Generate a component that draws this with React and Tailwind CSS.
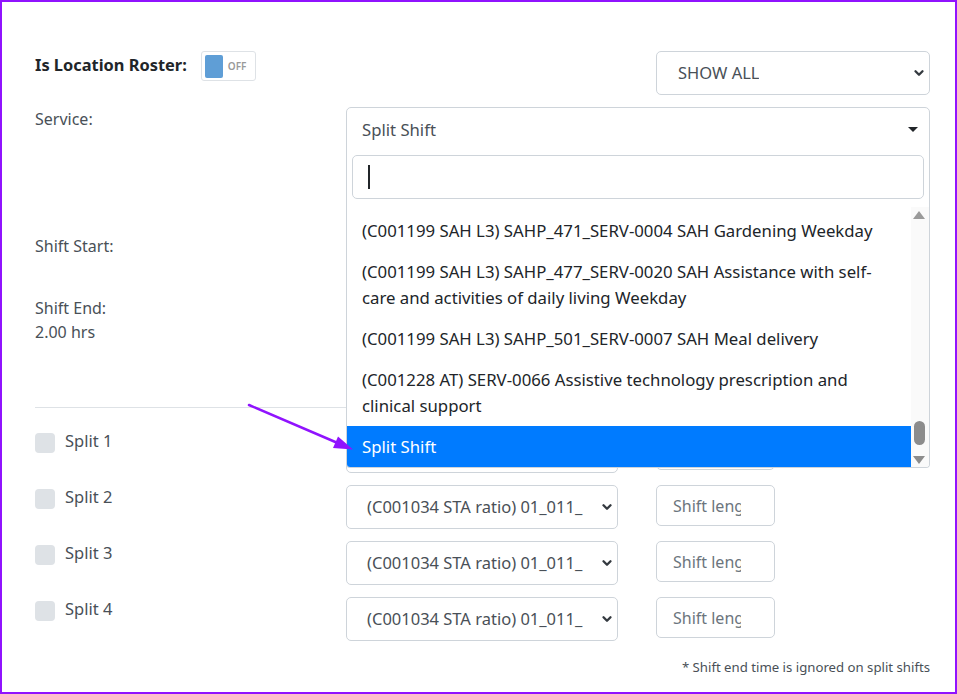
import React from 'react'
import { ChevronDown } from 'lucide-react'

const services = [
	{ id: 1, text: '(C001199 SAH L3) SAHP_471_SERV-0004 SAH Gardening Weekday' },
	{ id: 2, text: '(C001199 SAH L3) SAHP_477_SERV-0020 SAH Assistance with self-care and activities of daily living Weekday' },
	{ id: 3, text: '(C001199 SAH L3) SAHP_501_SERV-0007 SAH Meal delivery' },
	{ id: 4, text: '(C001228 AT) SERV-0066 Assistive technology prescription and clinical support' },
]

const SelectBox = ({ label, className }) => (
	<div className={`flex items-center justify-between h-[44px] bg-white border border-[#ced4da] rounded-[5px] text-[16.5px] text-[#495057] ${className}`}>
		<span className="pl-[20px] whitespace-nowrap overflow-hidden">{label}</span>
		<ChevronDown size={14} strokeWidth={4} className="mr-[3px] shrink-0 text-[#343a40]" />
	</div>
)

const SplitRow = ({ name }) => (
	<div className="flex h-[44px] mb-[12px]">
		<div className="w-[311px] flex items-start">
			<span className="w-[20px] h-[20px] mt-[4px] rounded-[4px] bg-[#dee2e6]"></span>
			<span className="ml-[10px] text-[16.5px] text-[#495057]">{name}</span>
		</div>
		<SelectBox label="(C001034 STA ratio) 01_011_" className="w-[272px] [&>span]:w-[238px]" />
		<div className="ml-[38px] w-[119px] h-[41px] pl-[16px] border border-[#ced4da] rounded-[5px] text-[#6c757d] flex items-center">
			<span className="w-[68px] overflow-hidden whitespace-nowrap">Shift length</span>
		</div>
	</div>
)

const App = () => {
	return (
		<div className="relative w-[957px] h-[694px] overflow-hidden bg-white border-2 border-[#9013fe] text-[16px] leading-[24px] text-[#212529] font-['Noto_Sans',sans-serif]">
			<div className="pl-[33px] pr-[25px] pt-[49px]">
				<div className="flex justify-between h-[44px]">
					<div className="flex items-start">
						<span className="font-bold text-[16.4px] mt-[2px]">Is Location Roster:</span>
						<div className="ml-[14px] w-[55px] h-[30px] p-[3px] border border-[#dee2e6] rounded-[3px] flex items-center">
							<span className="w-[18px] h-[23px] rounded-[2px] bg-[#5f9ed6]"></span>
							<span className="ml-[5px] text-[10px] font-semibold text-[#999]">OFF</span>
						</div>
					</div>
					<SelectBox label="SHOW ALL" className="w-[274px] [&>span]:pl-[21px]" />
				</div>

				<div className="flex mt-[12px] h-[127px]">
					<span className="w-[311px] text-[#495057]">Service:</span>
					<div className="flex items-center justify-between w-[584px] h-[44px] border border-[#ced4da] rounded-t-[5px] pl-[15px] pr-[11px] pt-[1px] text-[16.7px] text-[#495057]">
						<span>Split Shift</span>
						<span className="w-0 h-0 border-x-[5px] border-x-transparent border-t-[5px] border-t-[#212529]"></span>
					</div>
				</div>

				<div className="text-[#495057] h-[62px]">Shift Start:</div>
				<div className="text-[#495057] h-[111px]">
					Shift End:
					<br />
					2.00 hrs
				</div>

				<div className="border-t border-[#dee2e6] pt-[21px]">
					<SplitRow name="Split 1" />
					<SplitRow name="Split 2" />
					<SplitRow name="Split 3" />
					<SplitRow name="Split 4" />
				</div>

				<div className="text-right text-[13.2px] leading-[18px] mt-[17px] text-[#495057]">
					* Shift end time is ignored on split shifts
				</div>
			</div>

			{/* open dropdown sits over the shift and split rows */}
			<div className="absolute left-[344px] top-[148px] w-[584px] h-[318px] bg-white border border-t-0 border-[#ced4da] rounded-b-[4px] overflow-hidden">
				<div className="px-[5px] pt-[5px] pb-[8px]">
					<div className="h-[44px] border border-[#ced4da] rounded-[5px] flex items-center pl-[15px]">
						<span className="w-[1.5px] h-[24px] bg-[#212529]"></span>
					</div>
				</div>
				<div className="flex h-[261px]">
					<ul className="flex-1 flex flex-col justify-end min-w-0 text-[16.75px]">
						{services.map(item => (
							<li key={item.id} className="px-[15px] py-[7.5px] leading-[26px] text-[#212529]">
								{item.text}
							</li>
						))}
						<li className="h-[42px] shrink-0 px-[15px] flex items-center bg-[#007bff] text-white">Split Shift</li>
					</ul>
					<div className="relative w-[18px] bg-[#fafafa] shrink-0">
						<span className="absolute left-[2px] top-[4px] w-0 h-0 border-x-[6px] border-x-transparent border-b-[8px] border-b-[#9a9a9a]"></span>
						<span className="absolute left-[3px] bottom-[23px] w-[11px] h-[24px] rounded-[6px] bg-[#8c8c8c]"></span>
						<span className="absolute left-[2px] bottom-[4px] w-0 h-0 border-x-[6px] border-x-transparent border-t-[8px] border-t-[#8c8c8c]"></span>
					</div>
				</div>
			</div>

			{/* purple annotation arrow */}
			<svg className="absolute left-[244px] top-[400px]" width="114" height="54" viewBox="0 0 114 54" fill="none">
				<path d="M3 3 L94 42" stroke="#9013fe" strokeWidth="2.5" strokeLinecap="round" />
				<path d="M107 47.500 L87 46 L92 34.500 Z" fill="#9013fe" />
			</svg>
		</div>
	)
}

export default App
